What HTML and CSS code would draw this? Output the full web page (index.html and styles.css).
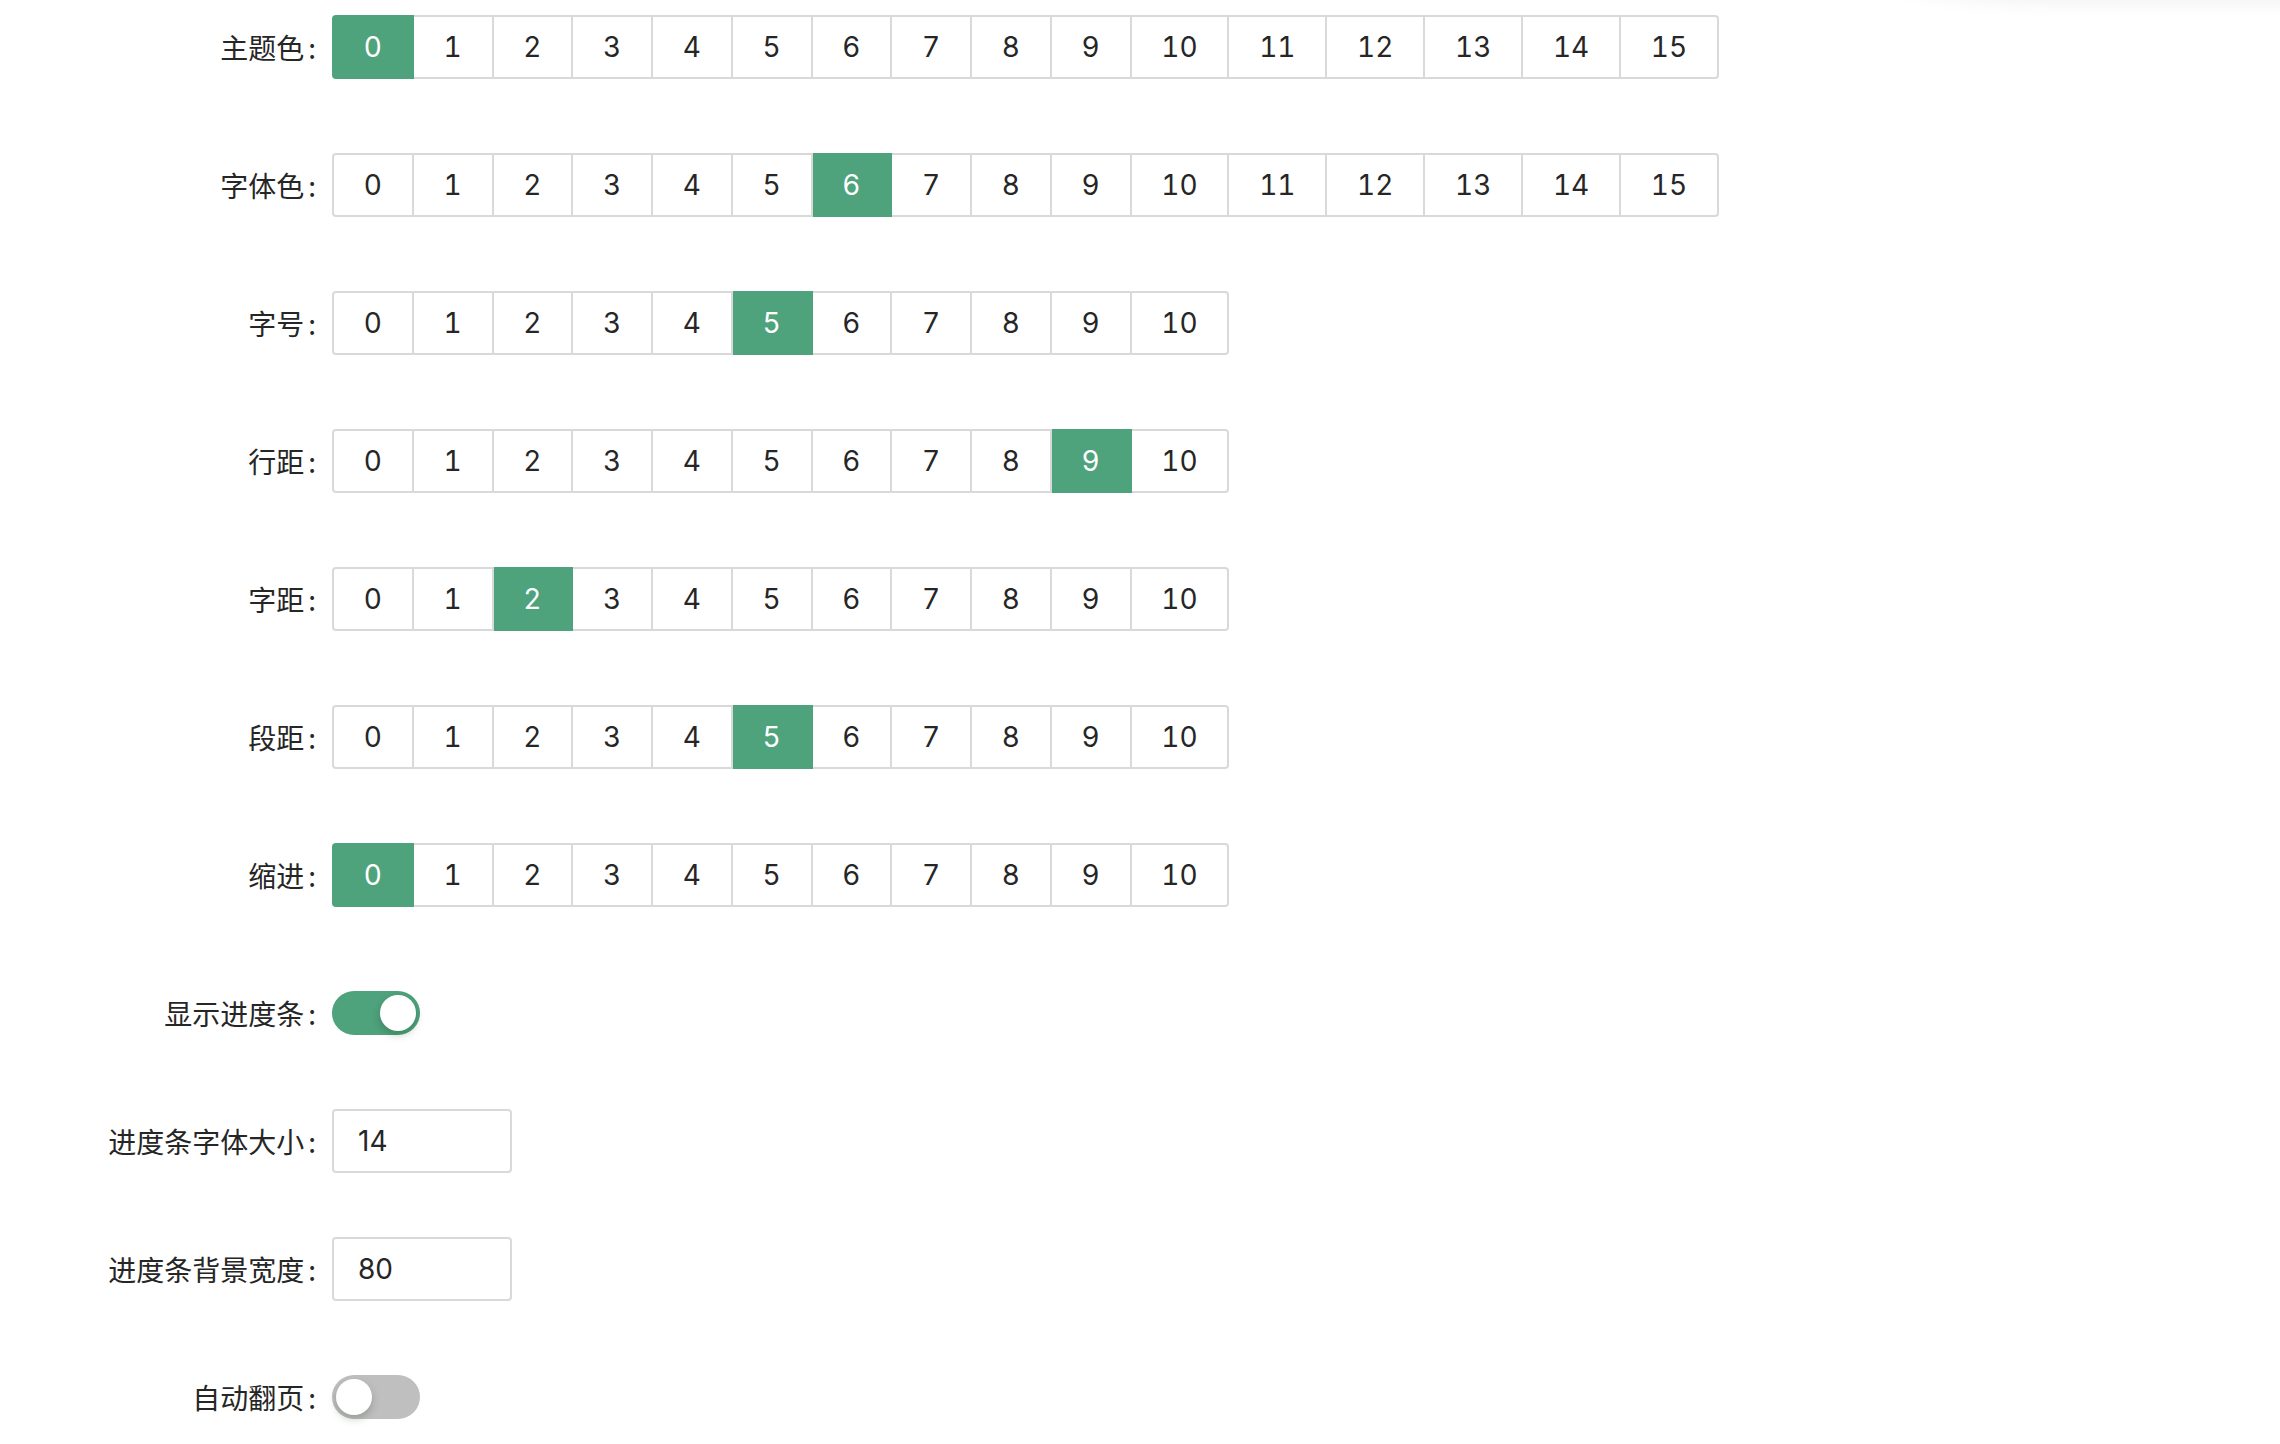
FILE: index.html
```html
<!DOCTYPE html>
<html lang="zh-CN">
<head>
<meta charset="utf-8">
<title>设置</title>
<link rel="stylesheet" href="styles.css">
</head>
<body>
<div class="top-shadow"></div>
<form class="settings">
  <div class="item radio-row">
    <label class="label">主题色</label>
    <div class="group">
      <span class="opt checked">0</span><span class="opt">1</span><span class="opt">2</span><span class="opt">3</span><span class="opt">4</span><span class="opt">5</span><span class="opt">6</span><span class="opt">7</span><span class="opt">8</span><span class="opt">9</span><span class="opt">10</span><span class="opt">11</span><span class="opt">12</span><span class="opt">13</span><span class="opt">14</span><span class="opt">15</span>
    </div>
  </div>
  <div class="item radio-row">
    <label class="label">字体色</label>
    <div class="group">
      <span class="opt">0</span><span class="opt">1</span><span class="opt">2</span><span class="opt">3</span><span class="opt">4</span><span class="opt">5</span><span class="opt checked">6</span><span class="opt">7</span><span class="opt">8</span><span class="opt">9</span><span class="opt">10</span><span class="opt">11</span><span class="opt">12</span><span class="opt">13</span><span class="opt">14</span><span class="opt">15</span>
    </div>
  </div>
  <div class="item radio-row">
    <label class="label">字号</label>
    <div class="group">
      <span class="opt">0</span><span class="opt">1</span><span class="opt">2</span><span class="opt">3</span><span class="opt">4</span><span class="opt checked">5</span><span class="opt">6</span><span class="opt">7</span><span class="opt">8</span><span class="opt">9</span><span class="opt">10</span>
    </div>
  </div>
  <div class="item radio-row">
    <label class="label">行距</label>
    <div class="group">
      <span class="opt">0</span><span class="opt">1</span><span class="opt">2</span><span class="opt">3</span><span class="opt">4</span><span class="opt">5</span><span class="opt">6</span><span class="opt">7</span><span class="opt">8</span><span class="opt checked">9</span><span class="opt">10</span>
    </div>
  </div>
  <div class="item radio-row">
    <label class="label">字距</label>
    <div class="group">
      <span class="opt">0</span><span class="opt">1</span><span class="opt checked">2</span><span class="opt">3</span><span class="opt">4</span><span class="opt">5</span><span class="opt">6</span><span class="opt">7</span><span class="opt">8</span><span class="opt">9</span><span class="opt">10</span>
    </div>
  </div>
  <div class="item radio-row">
    <label class="label">段距</label>
    <div class="group">
      <span class="opt">0</span><span class="opt">1</span><span class="opt">2</span><span class="opt">3</span><span class="opt">4</span><span class="opt checked">5</span><span class="opt">6</span><span class="opt">7</span><span class="opt">8</span><span class="opt">9</span><span class="opt">10</span>
    </div>
  </div>
  <div class="item radio-row">
    <label class="label">缩进</label>
    <div class="group">
      <span class="opt checked">0</span><span class="opt">1</span><span class="opt">2</span><span class="opt">3</span><span class="opt">4</span><span class="opt">5</span><span class="opt">6</span><span class="opt">7</span><span class="opt">8</span><span class="opt">9</span><span class="opt">10</span>
    </div>
  </div>
  <div class="item">
    <label class="label">显示进度条</label>
    <span class="switch on"><span class="knob"></span></span>
  </div>
  <div class="item">
    <label class="label">进度条字体大小</label>
    <input class="field" type="text" value="14">
  </div>
  <div class="item">
    <label class="label">进度条背景宽度</label>
    <input class="field" type="text" value="80">
  </div>
  <div class="item">
    <label class="label">自动翻页</label>
    <span class="switch"><span class="knob"></span></span>
  </div>
</form>
</body>
</html>
```

FILE: styles.css
```css
html, body {
  margin: 0;
  padding: 0;
  background: #ffffff;
}

body {
  font-family: Inter, "Liberation Sans", "Noto Sans CJK SC", sans-serif;
  color: #262626;
  position: relative;
  min-height: 1444px;
  overflow: hidden;
}

.top-shadow {
  position: absolute;
  top: -60px;
  right: -40px;
  width: 460px;
  height: 60px;
  background: #ffffff;
  border-radius: 0 0 0 200px / 0 0 0 40px;
  box-shadow: 0 4px 18px rgba(0, 0, 0, 0.05);
}

.settings {
  padding-top: 15px;
}

.item {
  display: flex;
  align-items: center;
  height: 64px;
  margin-bottom: 64px;
}

.item.radio-row {
  margin-bottom: 74px;
}

.label {
  flex: 0 0 332px;
  box-sizing: border-box;
  padding-right: 16px;
  text-align: right;
  font-family: "Noto Sans CJK SC", "Liberation Sans", sans-serif;
  font-size: 28px;
  line-height: 64px;
  color: #262626;
  white-space: nowrap;
}

.label::after {
  content: ":";
  margin-left: 4px;
}

.group {
  display: inline-flex;
  height: 64px;
}

.opt {
  display: inline-flex;
  align-items: center;
  justify-content: center;
  box-sizing: border-box;
  height: 64px;
  padding: 0 29.8px;
  border: 2px solid #d9d9d9;
  border-left: 0;
  background: #ffffff;
  font-size: 28px;
  font-variant-numeric: tabular-nums;
  color: #262626;
}

.opt:first-child {
  border-left: 2px solid #d9d9d9;
  border-radius: 4px 0 0 4px;
}

.opt:last-child {
  border-radius: 0 4px 4px 0;
}

.opt.checked {
  background: #4ea27c;
  border-color: #4ea27c;
  color: #ffffff;
}

.switch {
  position: relative;
  display: inline-block;
  width: 88px;
  height: 44px;
  border-radius: 22px;
  background: #bfbfbf;
}

.switch.on {
  background: #4ea27c;
}

.knob {
  position: absolute;
  top: 4px;
  left: 4px;
  width: 36px;
  height: 36px;
  border-radius: 50%;
  background: #ffffff;
  box-shadow: 0 4px 8px rgba(0, 35, 11, 0.22);
}

.switch.on .knob {
  left: 48px;
}

.field {
  box-sizing: border-box;
  width: 180px;
  height: 64px;
  margin: 0;
  padding: 0 24px;
  border: 2px solid #d9d9d9;
  border-radius: 4px;
  background: #ffffff;
  font-family: Inter, "Liberation Sans", sans-serif;
  font-size: 28px;
  color: #262626;
  outline: none;
}
```
